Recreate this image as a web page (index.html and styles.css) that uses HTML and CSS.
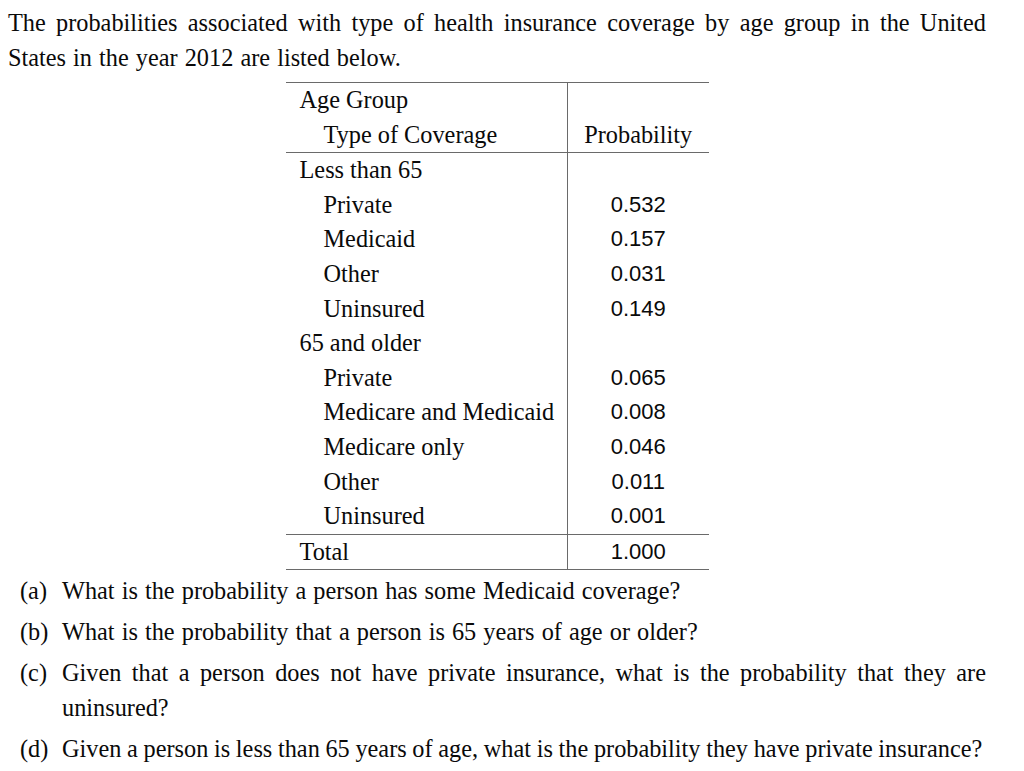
FILE: index.html
```html
<!DOCTYPE html>
<html lang="en">
<head>
<meta charset="utf-8">
<title>Health insurance coverage probabilities</title>
<link rel="stylesheet" href="styles.css">
</head>
<body>
<main class="page">
  <p class="intro"><span class="intro-line">The probabilities associated with type of health insurance coverage by age group in the United</span> States in the year 2012 are listed below.</p>
  <table class="prob-table">
    <colgroup>
      <col class="c-label">
      <col class="c-prob">
    </colgroup>
    <thead>
      <tr>
        <th class="col-label"><span class="lvl1">Age Group</span><span class="lvl2">Type of Coverage</span></th>
        <th class="col-prob">Probability</th>
      </tr>
    </thead>
    <tbody>
      <tr><td class="col-label">Less than 65</td><td class="col-prob"></td></tr>
      <tr><td class="col-label sub">Private</td><td class="col-prob num">0.532</td></tr>
      <tr><td class="col-label sub">Medicaid</td><td class="col-prob num">0.157</td></tr>
      <tr><td class="col-label sub">Other</td><td class="col-prob num">0.031</td></tr>
      <tr><td class="col-label sub">Uninsured</td><td class="col-prob num">0.149</td></tr>
      <tr><td class="col-label">65 and older</td><td class="col-prob"></td></tr>
      <tr><td class="col-label sub">Private</td><td class="col-prob num">0.065</td></tr>
      <tr><td class="col-label sub">Medicare and Medicaid</td><td class="col-prob num">0.008</td></tr>
      <tr><td class="col-label sub">Medicare only</td><td class="col-prob num">0.046</td></tr>
      <tr><td class="col-label sub">Other</td><td class="col-prob num">0.011</td></tr>
      <tr><td class="col-label sub">Uninsured</td><td class="col-prob num">0.001</td></tr>
    </tbody>
    <tfoot>
      <tr><td class="col-label">Total</td><td class="col-prob num">1.000</td></tr>
    </tfoot>
  </table>
  <ol class="questions">
    <li class="q"><span class="q-label">(a)</span><span class="q-text">What is the probability a person has some Medicaid coverage?</span></li>
    <li class="q"><span class="q-label">(b)</span><span class="q-text">What is the probability that a person is 65 years of age or older?</span></li>
    <li class="q"><span class="q-label">(c)</span><span class="q-text justify">Given that a person does not have private insurance, what is the probability that they are uninsured?</span></li>
    <li class="q"><span class="q-label">(d)</span><span class="q-text tight">Given a person is less than 65 years of age, what is the probability they have private insurance?</span></li>
  </ol>
</main>
</body>
</html>
```

FILE: styles.css
```css
html, body {
  margin: 0;
  padding: 0;
  background: #ffffff;
}

body {
  font-family: "Liberation Serif", "Times New Roman", serif;
  font-size: 24.3px;
  color: #0a0a0a;
}

.page {
  width: 978px;
  padding: 6px 0 0 8px;
}

.intro {
  margin: 0;
  line-height: 34.5px;
  word-spacing: 1px;
}

.intro-line {
  display: block;
  text-align: justify;
  text-align-last: justify;
}

.prob-table {
  margin: 7px auto 0;
  border-collapse: collapse;
  table-layout: fixed;
  width: 423px;
  line-height: 34.6px;
}

.c-label {
  width: 282px;
}

.c-prob {
  width: 141px;
}

.prob-table th,
.prob-table td {
  padding: 0;
  font-weight: normal;
  vertical-align: bottom;
  white-space: nowrap;
}

.prob-table thead tr,
.prob-table tfoot tr {
  border-top: 1px solid #6a6a6a;
  border-bottom: 1px solid #6a6a6a;
}

.prob-table .col-label {
  padding-left: 14px;
  text-align: left;
  border-right: 1px solid #6a6a6a;
}

.prob-table .sub {
  padding-left: 38px;
}

.col-prob {
  text-align: center;
}

.lvl1,
.lvl2 {
  display: block;
}

.lvl2 {
  padding-left: 24px;
}

.num {
  font-family: "Liberation Sans", Arial, sans-serif;
  font-size: 22px;
}

.questions {
  list-style: none;
  margin: 3px 0 0;
  padding: 0;
}

.q {
  display: flex;
  line-height: 35px;
  margin-bottom: 6px;
  word-spacing: 1px;
}

.q-label {
  width: 54px;
  flex: none;
  padding-left: 12px;
  box-sizing: border-box;
  word-spacing: 0;
}

.q-text {
  flex: 1;
}

.justify {
  text-align: justify;
}

.tight {
  white-space: nowrap;
  word-spacing: -0.4px;
}
```
